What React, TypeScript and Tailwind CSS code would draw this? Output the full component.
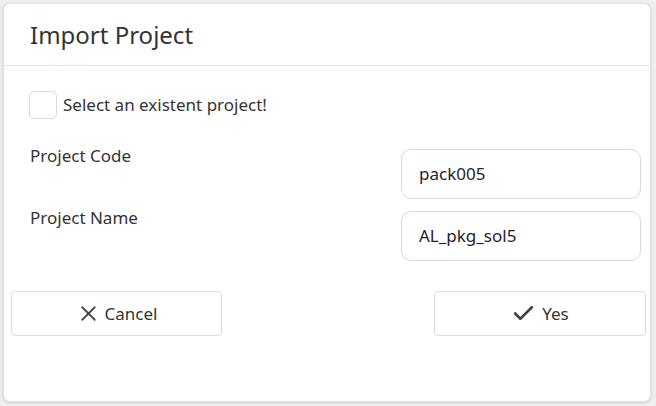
import { Check, X } from "lucide-react";

const font = { fontFamily: '"Noto Sans", "Open Sans", sans-serif' };

export default function App() {
  return (
    <div className="w-[656px] h-[406px] bg-[#efefef] p-[3px]" style={font}>
      <div className="w-[648px] h-[399px] bg-white rounded-[7px] border border-[#e2e2e2] shadow-[0_1px_3px_rgba(0,0,0,0.15)] flex flex-col">
        <div className="h-[62px] flex items-center px-[26px] border-b border-[#e3e3e3]">
          <h1 className="text-[24px] text-[#333] leading-none">Import Project</h1>
        </div>

        <div className="flex flex-col pl-[25px] pr-[9px]">
          <label className="flex items-center gap-[6px] mt-[25px] h-[28px]">
            <span className="w-[28px] h-[28px] rounded-[5px] border border-[#d6d9e0] bg-white" />
            <span className="text-[17px] text-[#333]">Select an existent project!</span>
          </label>

          <div className="flex justify-between mt-[25px]">
            <span className="text-[17px] leading-[24px] text-[#333] pl-[1px]">Project Code</span>
            <div className="mt-[5px] w-[240px] h-[50px] rounded-[10px] border border-[#d6d9e0] flex items-center px-[17px] text-[17px] text-[#1f2230]">
              pack005
            </div>
          </div>

          <div className="flex justify-between mt-[7px]">
            <span className="text-[17px] leading-[24px] text-[#333] pl-[1px]">Project Name</span>
            <div className="mt-[5px] w-[240px] h-[50px] rounded-[10px] border border-[#d6d9e0] flex items-center px-[17px] text-[17px] text-[#1f2230]">
              AL_pkg_sol5
            </div>
          </div>
        </div>

        <div className="flex justify-between pl-[7px] pr-[4px] mt-[30px]">
          <button className="w-[211px] h-[45px] rounded-[4px] border border-[#dcdcdc] bg-white flex items-center justify-center gap-[4px] text-[17px] text-[#333]">
            <X size={25} strokeWidth={1.7} className="text-[#444]" />
            Cancel
          </button>
          <button className="w-[212px] h-[45px] rounded-[4px] border border-[#dcdcdc] bg-white flex items-center justify-center gap-[6px] text-[17px] text-[#333]">
            <Check size={25} strokeWidth={2.5} className="text-[#444]" />
            Yes
          </button>
        </div>
      </div>
    </div>
  );
}
